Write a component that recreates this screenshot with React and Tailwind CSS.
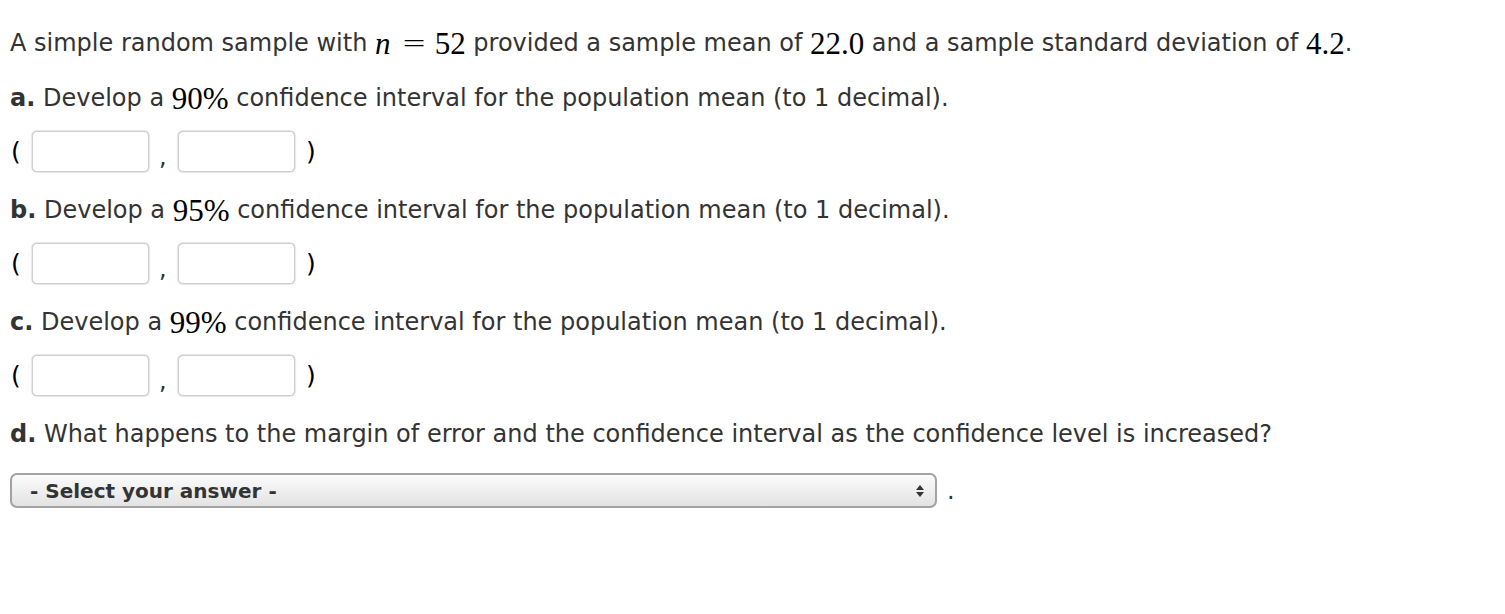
import React from "react";

const sans = { fontFamily: '"DejaVu Sans", Verdana, sans-serif' };
const serif = { fontFamily: '"Liberation Serif", "DejaVu Serif", serif' };

function M({ children, italic }) {
  return (
    <span
      style={serif}
      className={"text-[31px] leading-none text-black " + (italic ? "italic" : "")}
    >
      {children}
    </span>
  );
}

function Box() {
  return (
    <div className="w-[117px] h-[41px] rounded-[5px] border border-[#cfcfcf] bg-white shadow-[0_0_2px_rgba(0,0,0,0.35)]" />
  );
}

function Interval({ mt }) {
  return (
    <div className={"flex items-center h-[41px] " + mt}>
      <span className="text-[25px] leading-none text-black ml-[11px] w-[21px]" style={sans}>(</span>
      <Box />
      <span className="text-[24px] leading-none text-[#333] w-[29px] pl-[10px] pt-[10px]" style={sans}>,</span>
      <Box />
      <span className="text-[25px] leading-none text-black ml-[11px]" style={sans}>)</span>
    </div>
  );
}

function Part({ letter, pct, mt }) {
  return (
    <div className={"flex items-center h-[46px] whitespace-nowrap " + mt}>
      <span className="font-bold">{letter}.</span>
      <span>&nbsp;Develop a&nbsp;</span>
      <M>{pct}%</M>
      <span>&nbsp;confidence interval for the population mean (to 1 decimal).</span>
    </div>
  );
}

export default function App() {
  return (
    <div className="w-[1505px] h-[614px] bg-white text-[#333] text-[24px]" style={sans}>
      <div className="pl-[10px] pt-[20px]">
        <div className="flex items-center h-[46px] whitespace-nowrap">
          <span>A simple random sample with&nbsp;</span>
          <M italic>n</M>
          <span className="text-[30px] leading-none text-black ml-[11px] mr-[8px] font-light" style={sans}>=</span>
          <M>52</M>
          <span>&nbsp;provided a sample mean of&nbsp;</span>
          <M>22.0</M>
          <span>&nbsp;and a sample standard deviation of&nbsp;</span>
          <M>4.2</M>
          <span>.</span>
        </div>
        <Part letter="a" pct="90" mt="mt-[9px]" />
      </div>
      <Interval mt="mt-[10px]" />
      <div className="pl-[10px]">
        <Part letter="b" pct="95" mt="mt-[15px]" />
      </div>
      <Interval mt="mt-[10px]" />
      <div className="pl-[10px]">
        <Part letter="c" pct="99" mt="mt-[15px]" />
      </div>
      <Interval mt="mt-[10px]" />
      <div className="pl-[10px]">
        <div className="flex items-center h-[46px] whitespace-nowrap mt-[15px]">
          <span className="font-bold">d.</span>
          <span>&nbsp;What happens to the margin of error and the confidence interval as the confidence level is increased?</span>
        </div>
        <div className="flex items-center mt-[16px]">
          <div className="w-[927px] h-[35px] rounded-[7px] border-2 border-[#a3a3a3] bg-gradient-to-b from-[#fbfbfb] to-[#e3e3e3] flex items-center justify-between pl-[18px] pr-[10px]">
            <span className="font-bold text-[20px] text-[#333]">- Select your answer -</span>
            <svg width="10" height="14" viewBox="0 0 10 14">
              <path d="M5 1 L9 6 H1 Z" fill="#333" />
              <path d="M5 13 L9 8 H1 Z" fill="#333" />
            </svg>
          </div>
          <span className="ml-[10px] text-[24px] leading-none">.</span>
        </div>
      </div>
    </div>
  );
}
